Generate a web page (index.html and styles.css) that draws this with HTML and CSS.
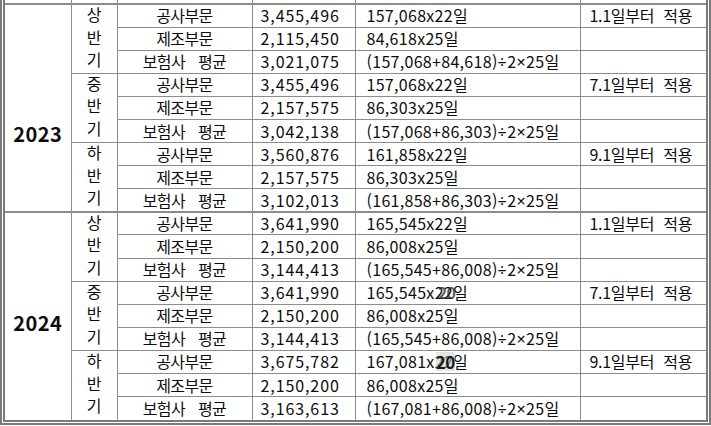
FILE: index.html
```html
<!DOCTYPE html>
<html lang="ko">
<head>
<meta charset="utf-8">
<link rel="stylesheet" href="styles.css">
</head>
<body>
<div class="sheet">
<table class="grid">
<colgroup>
<col class="c-year"><col class="c-half"><col class="c-cat"><col class="c-val"><col class="c-form"><col class="c-note">
</colgroup>
<tbody>
<tr class="stub"><td></td><td></td><td></td><td></td><td></td><td></td></tr>
</tbody>
<tbody class="year">
<tr><td class="yr yr-2023" rowspan="9">2023</td><td class="half" rowspan="3"><div class="half-in">상<br>반<br>기</div></td><td class="cat">공사부문</td><td class="num">3,455,496</td><td class="form">157,068x22일</td><td class="note">1.1일부터 적용</td></tr>
<tr><td class="cat">제조부문</td><td class="num">2,115,450</td><td class="form">84,618x25일</td><td class="note"></td></tr>
<tr><td class="cat">보험사 평균</td><td class="num">3,021,075</td><td class="form">(157,068+84,618)<span class="op">÷</span>2<span class="op">×</span>25일</td><td class="note"></td></tr>
<tr><td class="half" rowspan="3"><div class="half-in">중<br>반<br>기</div></td><td class="cat">공사부문</td><td class="num">3,455,496</td><td class="form">157,068x22일</td><td class="note">7.1일부터 적용</td></tr>
<tr><td class="cat">제조부문</td><td class="num">2,157,575</td><td class="form">86,303x25일</td><td class="note"></td></tr>
<tr><td class="cat">보험사 평균</td><td class="num">3,042,138</td><td class="form">(157,068+86,303)<span class="op">÷</span>2<span class="op">×</span>25일</td><td class="note"></td></tr>
<tr><td class="half" rowspan="3"><div class="half-in">하<br>반<br>기</div></td><td class="cat">공사부문</td><td class="num">3,560,876</td><td class="form">161,858x22일</td><td class="note">9.1일부터 적용</td></tr>
<tr><td class="cat">제조부문</td><td class="num">2,157,575</td><td class="form">86,303x25일</td><td class="note"></td></tr>
<tr><td class="cat">보험사 평균</td><td class="num">3,102,013</td><td class="form">(161,858+86,303)<span class="op">÷</span>2<span class="op">×</span>25일</td><td class="note"></td></tr>
</tbody>
<tbody class="year">
<tr><td class="yr yr-2024" rowspan="9">2024</td><td class="half" rowspan="3"><div class="half-in">상<br>반<br>기</div></td><td class="cat">공사부문</td><td class="num">3,641,990</td><td class="form">165,545x22일</td><td class="note">1.1일부터 적용</td></tr>
<tr><td class="cat">제조부문</td><td class="num">2,150,200</td><td class="form">86,008x25일</td><td class="note"></td></tr>
<tr><td class="cat">보험사 평균</td><td class="num">3,144,413</td><td class="form">(165,545+86,008)<span class="op">÷</span>2<span class="op">×</span>25일</td><td class="note"></td></tr>
<tr><td class="half" rowspan="3"><div class="half-in">중<br>반<br>기</div></td><td class="cat">공사부문</td><td class="num">3,641,990</td><td class="form">165,545x<span class="edit">22<span class="mark mark-faint">20</span></span>일</td><td class="note">7.1일부터 적용</td></tr>
<tr><td class="cat">제조부문</td><td class="num">2,150,200</td><td class="form">86,008x25일</td><td class="note"></td></tr>
<tr><td class="cat">보험사 평균</td><td class="num">3,144,413</td><td class="form">(165,545+86,008)<span class="op">÷</span>2<span class="op">×</span>25일</td><td class="note"></td></tr>
<tr><td class="half" rowspan="3"><div class="half-in">하<br>반<br>기</div></td><td class="cat">공사부문</td><td class="num">3,675,782</td><td class="form">167,081x<span class="edit">22<span class="mark mark-bold">20</span></span>일</td><td class="note">9.1일부터 적용</td></tr>
<tr><td class="cat">제조부문</td><td class="num">2,150,200</td><td class="form">86,008x25일</td><td class="note"></td></tr>
<tr><td class="cat">보험사 평균</td><td class="num">3,163,613</td><td class="form">(167,081+86,008)<span class="op">÷</span>2<span class="op">×</span>25일</td><td class="note"></td></tr>
</tbody>
</table>
</div>
</body>
</html>
```

FILE: styles.css
```css
html, body {
  margin: 0;
  padding: 0;
  background: #ffffff;
  overflow: hidden;
}

body {
  width: 711px;
  height: 426px;
  font-family: "Noto Sans CJK KR", "Noto Sans", sans-serif;
  color: #0d0d0d;
}

.sheet {
  width: 701px;
  border-left: 5px double #7a7a7a;
  border-right: 5px double #7a7a7a;
  border-bottom: 5px double #7a7a7a;
}

.grid {
  width: 701px;
  table-layout: fixed;
  border-collapse: collapse;
}

.c-year { width: 66px; }
.c-half { width: 46px; }
.c-cat { width: 135px; }
.c-val { width: 103px; }
.c-form { width: 225px; }
.c-note { width: 126px; }

.grid tr {
  height: 23.1px;
}

.grid td {
  padding: 0;
  border: 1px solid #8c8c8c;
  font-size: 16px;
  line-height: 19px;
  white-space: nowrap;
  overflow: visible;
}

.grid tr:first-child td {
  border-top: 2px solid #8c8c8c;
}

.grid tr.stub {
  height: 4px;
}

.grid tr.stub td {
  line-height: 2px;
  border-top: none;
}

.grid td:first-child {
  border-left: none;
}

.grid td:last-child {
  border-right: none;
}

.grid tbody.year:last-child tr:last-child td,
.grid td.yr-2024,
.grid tbody.year:last-child tr:nth-child(7) td.half {
  border-bottom: none;
}

.yr {
  text-align: center;
  vertical-align: middle;
  font-weight: bold;
  font-size: 20px !important;
  letter-spacing: 0.4px;
}

.yr-2023 { padding-top: 52px !important; }
.yr-2024 { padding-top: 12px !important; }

.half {
  text-align: center;
  vertical-align: top;
}

.half-in {
  line-height: 22.6px;
  margin-top: -2px;
  margin-bottom: -2px;
}

.cat {
  text-align: center;
  letter-spacing: -0.6px;
  word-spacing: 9px;
}

.num {
  padding-left: 8px !important;
  letter-spacing: 0.9px;
}

.form {
  padding-left: 11px !important;
  letter-spacing: 0.3px;
}

.op {
  font-family: "Noto Sans", sans-serif;
  letter-spacing: 0.5px;
  line-height: 10px;
}

.note {
  padding-left: 9px !important;
  letter-spacing: -0.3px;
  word-spacing: 5px;
}

.edit {
  position: relative;
  display: inline-block;
  line-height: 19px;
}

.mark {
  position: absolute;
  top: 0;
  font-weight: bold;
  letter-spacing: -0.5px;
}

.mark-faint {
  left: 3px;
  color: rgba(40, 40, 40, 0.75);
}

.mark-bold {
  left: 1px;
  color: #1a1a1a;
  background: rgba(205, 205, 205, 0.55);
  font-size: 17px;
}
```
